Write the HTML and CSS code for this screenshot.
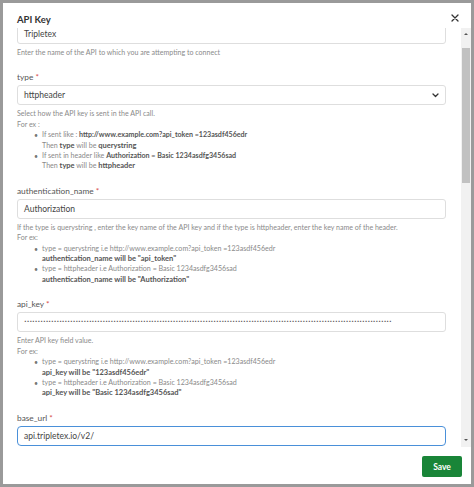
FILE: index.html
```html
<!DOCTYPE html>
<html>
<head>
<meta charset="utf-8">
<link rel="stylesheet" href="styles.css">
</head>
<body>
<div class="backdrop">
  <div class="dialog">
    <header class="head">
      <h2 class="title">API Key</h2>
      <button class="close" aria-label="Close">
        <svg width="8" height="8" viewBox="0 0 8 8"><path d="M1 1L7 7M7 1L1 7" stroke="#333" stroke-width="1.3" stroke-linecap="round"/></svg>
      </button>
    </header>
    <div class="body">
      <div class="scroll">
        <div class="content">
          <div class="field">
            <div class="input">Tripletex</div>
            <div class="help"><p>Enter the name of the API to which you are attempting to connect</p></div>
          </div>
          <div class="field">
            <div class="label">type <span class="req">*</span></div>
            <div class="input select">httpheader
              <svg class="chev" width="7" height="5" viewBox="0 0 7 5"><path d="M1 1L3.5 3.5L6 1" stroke="#333" stroke-width="1.3" fill="none" stroke-linecap="round" stroke-linejoin="round"/></svg>
            </div>
            <div class="help">
              <p>Select how the API key is sent in the API call.</p>
              <p>For ex :</p>
              <ul>
                <li><span>If sent like : <b class="tight">http://www.example.com?api_token =123asdf456edr</b><br>Then <b>type</b> will be <b>querystring</b></span></li>
                <li><span>If sent in header like <b class="tight">Authorization = Basic 1234asdfg3456sad</b><br>Then <b>type</b> will be <b>httpheader</b></span></li>
              </ul>
            </div>
          </div>
          <div class="field">
            <div class="label">authentication_name <span class="req">*</span></div>
            <div class="input">Authorization</div>
            <div class="help">
              <p>If the type is querystring , enter the key name of the API key and if the type is httpheader, enter the key name of the header.</p>
              <p>For ex:</p>
              <ul>
                <li><span>type = querystring i.e http://www.example.com?api_token =123asdf456edr<br><b>authentication_name will be "api_token"</b></span></li>
                <li><span>type = httpheader i.e Authorization = Basic 1234asdfg3456sad<br><b>authentication_name will be "Authorization"</b></span></li>
              </ul>
            </div>
          </div>
          <div class="field">
            <div class="label">api_key <span class="req">*</span></div>
            <div class="input pw"><span class="dots">••••••••••••••••••••••••••••••••••••••••••••••••••••••••••••••••••••••••••••••••••••••••••••••••••••••••••••••••••••••••••••••••••••••••</span></div>
            <div class="help">
              <p>Enter API key field value.</p>
              <p>For ex:</p>
              <ul>
                <li><span>type = querystring i.e http://www.example.com?api_token =123asdf456edr<br><b>api_key will be "123asdf456edr"</b></span></li>
                <li><span>type = httpheader i.e Authorization = Basic 1234asdfg3456sad<br><b>api_key will be "Basic 1234asdfg3456sad"</b></span></li>
              </ul>
            </div>
          </div>
          <div class="field">
            <div class="label">base_url <span class="req">*</span></div>
            <div class="input focus">api.tripletex.io/v2/</div>
          </div>
        </div>
      </div>
      <div class="scrollbar">
        <div class="arrow up"></div>
        <div class="track"><div class="thumb"></div></div>
        <div class="arrow down"></div>
      </div>
    </div>
    <footer class="foot">
      <button class="save">Save</button>
    </footer>
  </div>
</div>
</body>
</html>
```

FILE: styles.css
```css
* { box-sizing: border-box; }
html, body { margin: 0; padding: 0; }
body {
  font-family: Lato, "Open Sans", "Liberation Sans", sans-serif;
  background: #8f8f8f;
}
.backdrop {
  width: 474px;
  height: 487px;
  padding: 3px 3px 3px 3px;
  background: #9a9a9a;
  overflow: hidden;
}
.dialog {
  background: #fff;
  height: 481px;
  display: flex;
  flex-direction: column;
}
.head {
  height: 25px;
  display: flex;
  justify-content: space-between;
  padding: 10px 12px 0 14px;
  flex: none;
}
.title {
  margin: 0;
  font-size: 9.5px;
  line-height: 13px;
  font-weight: 700;
  color: #333;
}
.close {
  border: 0;
  background: none;
  padding: 0;
  width: 8px;
  height: 8px;
  margin-top: 1px;
  display: flex;
}
.body {
  height: 419px;
  display: flex;
  flex: none;
}
.scroll {
  flex: 1;
  overflow: hidden;
  padding: 0 15px 0 14px;
}
.content { margin-top: -4px; }
.field + .field { margin-top: 13px; }
.label {
  font-size: 8.3px;
  line-height: 12px;
  color: #555;
  margin-bottom: 2px;
}
.req { color: #d9534f; }
.input {
  height: 20px;
  border: 1px solid #dedede;
  border-radius: 3px;
  padding: 0 6px;
  font-size: 8.5px;
  line-height: 18px;
  color: #444;
  display: flex;
  align-items: center;
}
.select { justify-content: space-between; }
.pw .dots {
  font-family: "DejaVu Sans", sans-serif;
  font-size: 4.5px;
  letter-spacing: 0.05px;
  color: #555;
  white-space: nowrap;
}
.focus {
  border: 1.5px solid #4a90d9;
  border-radius: 4px;
}
.help {
  margin-top: 4px;
  font-size: 7.05px;
  line-height: 10.4px;
  color: #8a8a8a;
}
.help p { margin: 0; }
.help ul {
  margin: 0;
  padding-left: 17px;
  list-style: none;
  font-size: 7.1px;
}
.help li {
  display: grid;
  grid-template-columns: 8px 1fr;
}
.help li::before {
  content: "•";
  color: #777;
  font-size: 7px;
}
.help b { font-weight: 700; color: #555; font-size: 7.5px; }
.help b.tight { font-size: 7.1px; }
.scrollbar {
  width: 10px;
  background: #f1f1f1;
  display: flex;
  flex-direction: column;
  flex: none;
}
.arrow {
  height: 13px;
  position: relative;
}
.arrow::after {
  content: "";
  position: absolute;
  left: 3px;
  border-left: 2px solid transparent;
  border-right: 2px solid transparent;
}
.arrow.up::after { top: 5px; border-bottom: 2.5px solid #555; }
.arrow.down::after { top: 5px; border-top: 2.5px solid #555; }
.track { flex: 1; padding: 7px 1px 0 1px; }
.thumb { height: 135px; background: #c1c1c1; }
.foot {
  flex: 1;
  display: flex;
  justify-content: flex-end;
  padding: 9px 9px 0 0;
}
.save {
  height: 21px;
  width: 40px;
  border: 0;
  border-radius: 2px;
  background: #198538;
  color: #fff;
  font-family: Lato, sans-serif;
  font-weight: 700;
  font-size: 8.5px;
  padding: 0;
}
```
